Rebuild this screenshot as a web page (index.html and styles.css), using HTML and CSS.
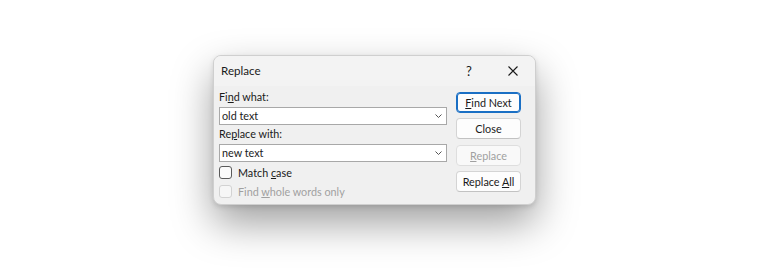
FILE: index.html
```html
<!DOCTYPE html>
<html lang="en">

<head>
    <meta charset="UTF-8" />
    <meta name="viewport" content="width=device-width, initial-scale=1" />
    <title>Replace</title>
    <link rel="stylesheet" href="styles.css">
</head>

<body>
    <div class="stage">
        <div class="dialog">
            <div class="titlebar">
                <span class="title">Replace</span>
                <span class="caption-btn help">?</span>
                <span class="caption-btn close">
                    <svg width="10" height="10" viewBox="0 0 10 10">
                        <path d="M0.5 0.5 L9.5 9.5 M9.5 0.5 L0.5 9.5" stroke="#1a1a1a" stroke-width="1.1" fill="none" />
                    </svg>
                </span>
            </div>
            <div class="content">
                <div class="fields">
                    <div class="label">Fi<u>n</u>d what:</div>
                    <div class="combo">
                        <span class="combo-text">old text</span>
                        <svg class="chevron" width="7" height="4" viewBox="0 0 7 4">
                            <path d="M0.5 0.5 L3.5 3.5 L6.5 0.5" stroke="#555" stroke-width="1" fill="none" />
                        </svg>
                    </div>
                    <div class="label second">Re<u>p</u>lace with:</div>
                    <div class="combo">
                        <span class="combo-text">new text</span>
                        <svg class="chevron" width="7" height="4" viewBox="0 0 7 4">
                            <path d="M0.5 0.5 L3.5 3.5 L6.5 0.5" stroke="#555" stroke-width="1" fill="none" />
                        </svg>
                    </div>
                    <div class="check">
                        <span class="box"></span>
                        <span>Match <u>c</u>ase</span>
                    </div>
                    <div class="check disabled">
                        <span class="box"></span>
                        <span>Find <u>w</u>hole words only</span>
                    </div>
                </div>
                <div class="actions">
                    <button class="btn default"><u>F</u>ind Next</button>
                    <button class="btn">Close</button>
                    <button class="btn" disabled><u>R</u>eplace</button>
                    <button class="btn">Replace <u>A</u>ll</button>
                </div>
            </div>
        </div>
    </div>
</body>

</html>
```

FILE: styles.css
```css
body {
    margin: 0;
    background: #fff;
    font-family: Lato, "Noto Sans", sans-serif;
    font-size: 10.8px;
    color: #1a1a1a;
}

.stage {
    height: 273px;
    box-sizing: border-box;
    padding: 55px 0 0 213px;
}

.dialog {
    width: 321px;
    height: 148px;
    background: #f0f0f0;
    border: 1px solid #cfcfcf;
    border-radius: 8px;
    box-shadow: 0 18px 40px rgba(0, 0, 0, 0.38), 0 2px 5px rgba(0, 0, 0, 0.12);
    overflow: hidden;
}

.titlebar {
    display: flex;
    align-items: center;
    height: 30px;
    background: #f3f3f3;
}

.title {
    flex-grow: 1;
    padding-left: 7px;
    padding-bottom: 1px;
    font-size: 11.6px;
}

.caption-btn {
    width: 44px;
    height: 30px;
    display: flex;
    align-items: center;
    justify-content: center;
}

.help {
    font-size: 13px;
}

.content {
    display: flex;
    padding: 3px 0 0 5px;
}

.fields {
    width: 228px;
}

.label {
    height: 16px;
    line-height: 16px;
}

.label.second {
    margin-top: 1px;
}

.combo {
    margin-top: 2px;
    height: 16px;
    background: #fff;
    border: 1px solid #a8a8a8;
    display: flex;
    align-items: center;
    justify-content: space-between;
}

.combo-text {
    padding-left: 2px;
    line-height: 16px;
}

.chevron {
    margin-right: 4px;
}

.check {
    display: flex;
    align-items: center;
    gap: 6px;
    height: 16px;
    margin-top: 2px;
}

.check + .check {
    margin-top: 3px;
}

.check .box {
    width: 11px;
    height: 11px;
    border: 1px solid #5a5a5a;
    border-radius: 3px;
    background: #fbfbfb;
}

.check.disabled {
    color: #a0a0a0;
}

.check.disabled .box {
    border-color: #d2d2d2;
    background: #f6f6f6;
}

.actions {
    display: flex;
    flex-direction: column;
    gap: 5.3px;
    margin: 3px 0 0 9px;
}

.btn {
    width: 65px;
    height: 21px;
    padding: 0;
    font-family: inherit;
    font-size: 10.8px;
    color: #1a1a1a;
    background: #fdfdfd;
    border: 1px solid #d4d4d4;
    border-bottom-color: #c2c2c2;
    border-radius: 4px;
}

.btn.default {
    border: 1px solid #1a6fc4;
    box-shadow: inset 0 0 0 1px #1a6fc4;
}

.btn:disabled {
    color: #a0a0a0;
    background: #f9f9f9;
    border-color: #dedede;
}
```
